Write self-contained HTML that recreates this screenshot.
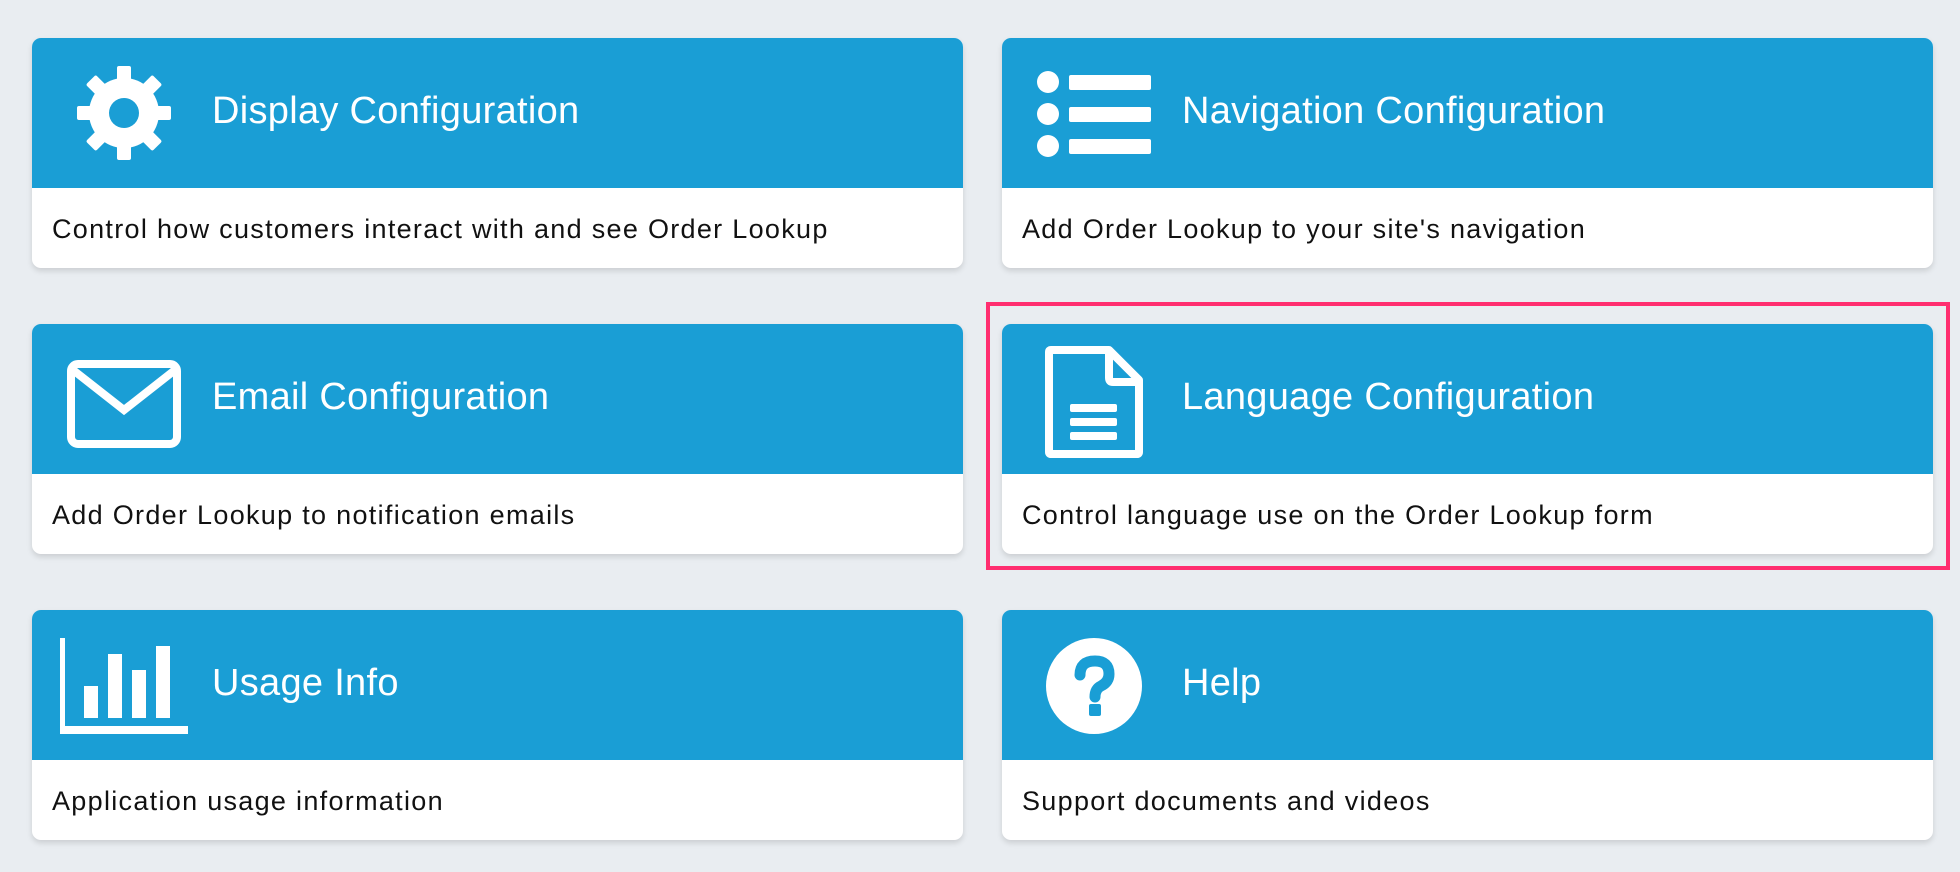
<!DOCTYPE html>
<html><head><style>
body{margin:0;width:1960px;height:872px;background:#e9edf1;font-family:"Liberation Sans",sans-serif;position:relative;overflow:hidden}
.card{position:absolute;width:931px;height:230px;background:#fff;border-radius:9px;overflow:hidden;box-shadow:0 3px 6px rgba(0,0,0,.13)}
.hd{position:absolute;left:0;top:0;width:100%;height:150px;background:#1a9ed5}
.t{position:absolute;left:180px;top:51px;color:#fff;font-size:38px;line-height:44px;letter-spacing:0.3px}
.b{position:absolute;left:20px;top:176px;font-size:27px;line-height:30px;color:#111;letter-spacing:1.3px}
svg{position:absolute}
.pink{position:absolute;left:986px;top:302px;width:956px;height:260px;border:4px solid #ff2e70}
</style></head><body>
<div class="card" style="left:32px;top:38px">
 <div class="hd"></div>
 <svg style="left:43px;top:26px" width="98" height="98" viewBox="0 0 98 98"><g fill="#fff"><circle cx="49" cy="49" r="35"/><rect x="42" y="2" width="14" height="94" rx="2"/><rect x="42" y="2" width="14" height="94" rx="2" transform="rotate(45 49 49)"/><rect x="42" y="2" width="14" height="94" rx="2" transform="rotate(90 49 49)"/><rect x="42" y="2" width="14" height="94" rx="2" transform="rotate(135 49 49)"/></g><circle cx="49" cy="49" r="15" fill="#1a9ed5"/></svg>
 <div class="t">Display Configuration</div>
 <div class="b">Control how customers interact with and see Order Lookup</div>
</div>
<div class="card" style="left:1002px;top:38px">
 <div class="hd"></div>
 <svg style="left:35px;top:33px" width="114" height="86" viewBox="0 0 114 86"><g fill="#fff"><circle cx="11" cy="11" r="11"/><circle cx="11" cy="43" r="11"/><circle cx="11" cy="75" r="11"/><rect x="32" y="4" width="82" height="15" rx="2"/><rect x="32" y="36" width="82" height="15" rx="2"/><rect x="32" y="68" width="82" height="15" rx="2"/></g></svg>
 <div class="t">Navigation Configuration</div>
 <div class="b">Add Order Lookup to your site's navigation</div>
</div>
<div class="card" style="left:32px;top:324px">
 <div class="hd"></div>
 <svg style="left:35px;top:36px" width="114" height="88" viewBox="0 0 114 88"><rect x="4" y="4" width="106" height="80" rx="7" fill="none" stroke="#fff" stroke-width="8"/><path d="M6 10 L57 50 L108 10" fill="none" stroke="#fff" stroke-width="8"/></svg>
 <div class="t">Email Configuration</div>
 <div class="b">Add Order Lookup to notification emails</div>
</div>
<div class="card" style="left:1002px;top:324px">
 <div class="hd"></div>
 <svg style="left:43px;top:22px" width="98" height="112" viewBox="0 0 98 112"><path d="M4 6 Q4 4 6 4 H64 L94 34 V106 Q94 108 92 108 H6 Q4 108 4 106 Z" fill="none" stroke="#fff" stroke-width="8" stroke-linejoin="round"/><path d="M64 4 V32 Q64 36 68 36 H94" fill="none" stroke="#fff" stroke-width="8"/><g fill="#fff"><rect x="25" y="58" width="47" height="8" rx="2"/><rect x="25" y="72" width="47" height="8" rx="2"/><rect x="25" y="86" width="47" height="8" rx="2"/></g></svg>
 <div class="t">Language Configuration</div>
 <div class="b">Control language use on the Order Lookup form</div>
</div>
<div class="card" style="left:32px;top:610px">
 <div class="hd"></div>
 <svg style="left:28px;top:28px" width="130" height="96" viewBox="0 0 130 96"><g fill="#fff"><rect x="0" y="0" width="5" height="96"/><rect x="0" y="88" width="128" height="8"/><rect x="24" y="48" width="14" height="32"/><rect x="48" y="16" width="14" height="64"/><rect x="72" y="32" width="14" height="48"/><rect x="96" y="8" width="14" height="72"/></g></svg>
 <div class="t">Usage Info</div>
 <div class="b">Application usage information</div>
</div>
<div class="card" style="left:1002px;top:610px">
 <div class="hd"></div>
 <svg style="left:43px;top:27px" width="98" height="98" viewBox="0 0 98 98"><circle cx="49" cy="49" r="48" fill="#fff"/><path d="M35 38 Q35 24 50 24 Q64 24 64 37 Q64 45 56 49 Q50 52 50 60" fill="none" stroke="#1a9ed5" stroke-width="11" stroke-linecap="round"/><rect x="44" y="67" width="12" height="12" rx="2" fill="#1a9ed5"/></svg>
 <div class="t">Help</div>
 <div class="b">Support documents and videos</div>
</div>
<div class="pink"></div>
</body></html>
